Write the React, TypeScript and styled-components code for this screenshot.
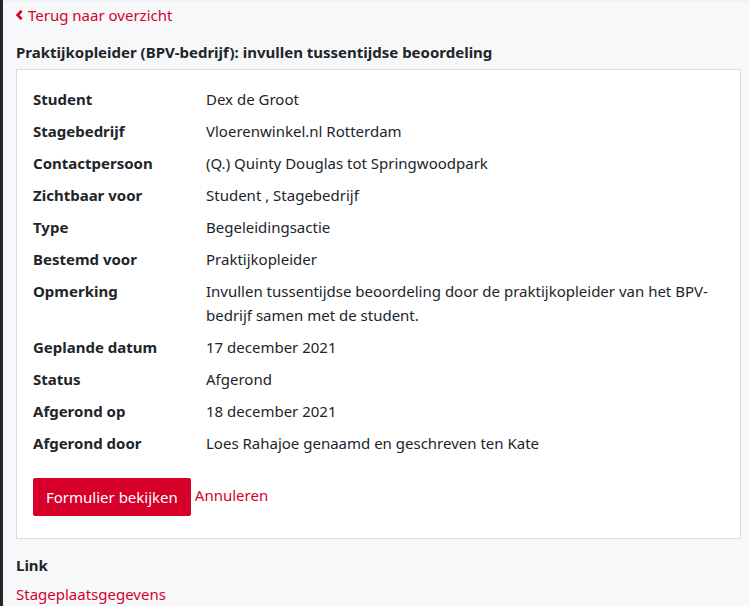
import React from "react";
import styled, { createGlobalStyle } from "styled-components";

const Global = createGlobalStyle`
  html, body { margin: 0; padding: 0; }
  body {
    background: #f7f8fa;
    font-family: "Noto Sans", "Open Sans", "Liberation Sans", sans-serif;
    font-size: 15px;
    color: #212529;
  }
`;

const RED = "#d6002b";

const Shell = styled.div`
  display: flex;
  min-height: 606px;
`;

const SideEdge = styled.div`
  width: 3px;
  flex: 0 0 3px;
  background: #23272b;
`;

const Main = styled.main`
  flex: 1;
  padding: 3px 8px 0 13px;
  box-shadow: inset 0 3px 3px -2px rgba(0, 0, 0, 0.06);
`;

const BackLink = styled.a`
  display: inline-flex;
  align-items: center;
  gap: 5px;
  color: ${RED};
  text-decoration: none;
  line-height: 24px;
  svg { width: 7px; height: 10px; }
`;

const Title = styled.h1`
  margin: 14px 0 6px;
  font-size: 15px;
  font-weight: 700;
  line-height: 22px;
`;

const Card = styled.section`
  background: #fff;
  border: 1px solid #dcdde1;
  padding: 17px 16px 22px 16px;
`;

const Grid = styled.dl`
  display: grid;
  grid-template-columns: 173px 1fr;
  row-gap: 8px;
  margin: 0;
  line-height: 24px;
`;

const Label = styled.dt`
  font-weight: 700;
`;

const Value = styled.dd`
  margin: 0;
`;

const Actions = styled.div`
  display: flex;
  align-items: flex-start;
  gap: 4px;
  margin-top: 23px;
`;

const PrimaryButton = styled.button`
  background: ${RED};
  color: #fff;
  border: none;
  border-radius: 2px;
  font: inherit;
  height: 38px;
  padding: 0 13px;
  cursor: pointer;
`;

const TextLink = styled.a`
  color: ${RED};
  text-decoration: none;
  line-height: 35px;
`;

const SectionTitle = styled.h2`
  margin: 14px 0 5px;
  font-size: 15px;
  font-weight: 700;
  line-height: 24px;
`;

const BlockLink = styled.a`
  display: block;
  color: ${RED};
  text-decoration: none;
  line-height: 24px;
`;

const rows: [string, string][] = [
  ["Student", "Dex de Groot"],
  ["Stagebedrijf", "Vloerenwinkel.nl Rotterdam"],
  ["Contactpersoon", "(Q.) Quinty Douglas tot Springwoodpark"],
  ["Zichtbaar voor", "Student , Stagebedrijf"],
  ["Type", "Begeleidingsactie"],
  ["Bestemd voor", "Praktijkopleider"],
  [
    "Opmerking",
    "Invullen tussentijdse beoordeling door de praktijkopleider van het BPV-bedrijf samen met de student.",
  ],
  ["Geplande datum", "17 december 2021"],
  ["Status", "Afgerond"],
  ["Afgerond op", "18 december 2021"],
  ["Afgerond door", "Loes Rahajoe genaamd en geschreven ten Kate"],
];

export default function App() {
  return (
    <>
      <Global />
      <Shell>
        <SideEdge />
        <Main>
          <BackLink href="#">
            <svg viewBox="0 0 7 10" aria-hidden="true">
              <path d="M5.6 0.8 L1.6 5 L5.6 9.2" fill="none" stroke={RED} strokeWidth="2.6" />
            </svg>
            Terug naar overzicht
          </BackLink>
          <Title>Praktijkopleider (BPV-bedrijf): invullen tussentijdse beoordeling</Title>
          <Card>
            <Grid>
              {rows.map(([l, v]) => (
                <React.Fragment key={l}>
                  <Label>{l}</Label>
                  <Value>{v}</Value>
                </React.Fragment>
              ))}
            </Grid>
            <Actions>
              <PrimaryButton>Formulier bekijken</PrimaryButton>
              <TextLink href="#">Annuleren</TextLink>
            </Actions>
          </Card>
          <SectionTitle>Link</SectionTitle>
          <BlockLink href="#">Stageplaatsgegevens</BlockLink>
        </Main>
      </Shell>
    </>
  );
}
